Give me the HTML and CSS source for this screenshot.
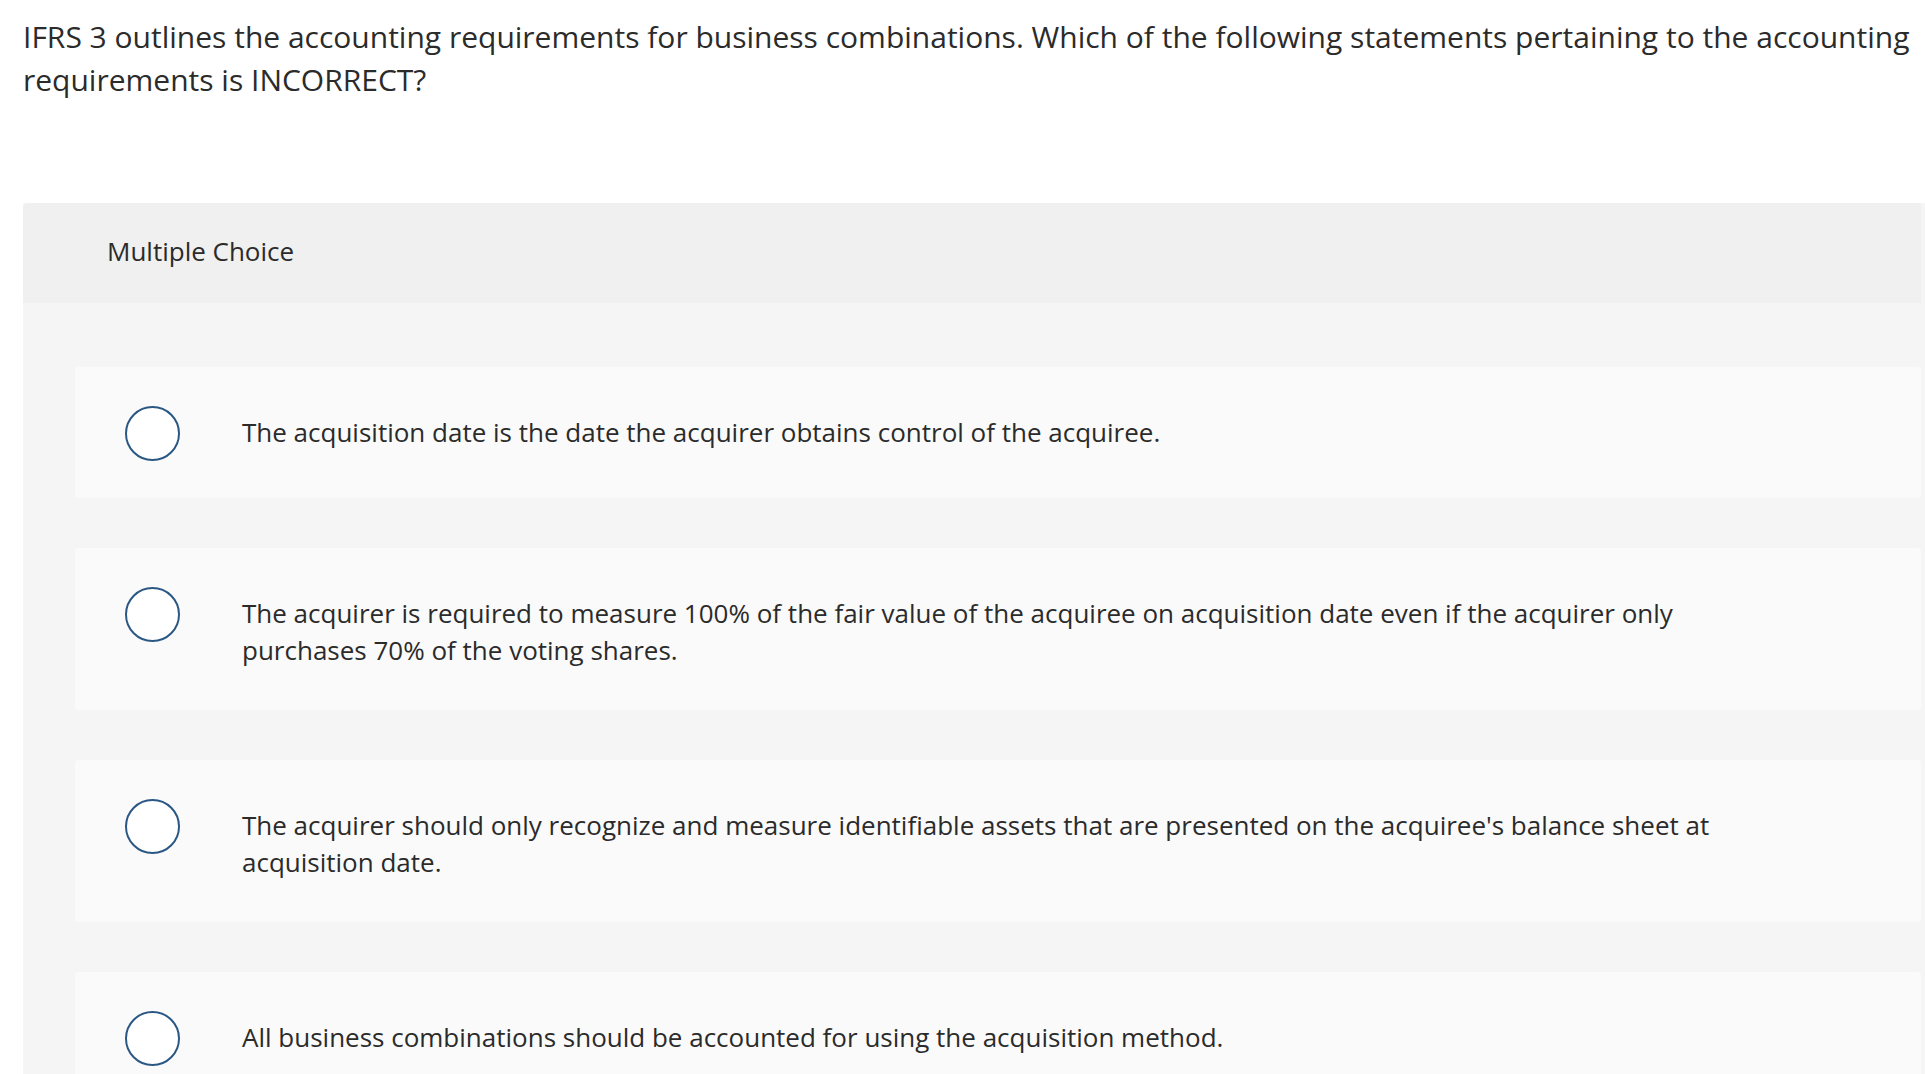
FILE: index.html
```html
<!DOCTYPE html>
<html lang="en">
<head>
<meta charset="utf-8">
<title>Multiple Choice</title>
<link rel="stylesheet" href="styles.css">
</head>
<body>
<main class="page">
  <p class="question">IFRS 3 outlines the accounting requirements for business combinations. Which of the following statements pertaining to the accounting requirements is INCORRECT?</p>

  <section class="mc">
    <header class="mc-header">Multiple Choice</header>
    <div class="mc-body">
      <label class="choice">
        <span class="radio"></span>
        <span class="choice-text">The acquisition date is the date the acquirer obtains control of the acquiree.</span>
      </label>
      <label class="choice">
        <span class="radio"></span>
        <span class="choice-text">The acquirer is required to measure 100% of the fair value of the acquiree on acquisition date even if the acquirer only purchases 70% of the voting shares.</span>
      </label>
      <label class="choice">
        <span class="radio"></span>
        <span class="choice-text">The acquirer should only recognize and measure identifiable assets that are presented on the acquiree's balance sheet at acquisition date.</span>
      </label>
      <label class="choice">
        <span class="radio"></span>
        <span class="choice-text">All business combinations should be accounted for using the acquisition method.</span>
      </label>
    </div>
  </section>
</main>
</body>
</html>
```
FILE: styles.css
```css
html, body {
  margin: 0;
  padding: 0;
  background: #ffffff;
  overflow: hidden;
}

body {
  font-family: "Open Sans", "Noto Sans", sans-serif;
  color: #2d2d2d;
}

.page {
  padding: 15px 0 0 23px;
}

.question {
  margin: 0 0 102px 0;
  font-size: 30px;
  line-height: 43px;
  color: #2b2b2b;
}

.mc {
  background: #f5f5f5;
  border-radius: 4px 0 0 0;
  padding-right: 4px;
}

.mc-header {
  background: #f0f0f0;
  border-radius: 4px 0 0 0;
  height: 100px;
  box-sizing: border-box;
  padding: 30px 0 0 84px;
  font-size: 26px;
  line-height: 37px;
  color: #2b2b2b;
}

.mc-body {
  padding: 64px 0 40px 52px;
  display: flex;
  flex-direction: column;
  gap: 50px;
}

.choice {
  display: flex;
  align-items: flex-start;
  background: #fafafa;
  border-radius: 4px;
  padding: 38px 156px 37px 50px;
}

.radio {
  flex: none;
  width: 51px;
  height: 51px;
  margin-top: 1px;
  border: 2px solid #2a5784;
  border-radius: 50%;
  background: #ffffff;
}

.choice-text {
  padding: 9px 0 4px 62px;
  font-size: 26px;
  line-height: 37px;
  color: #2b2b2b;
}
```
